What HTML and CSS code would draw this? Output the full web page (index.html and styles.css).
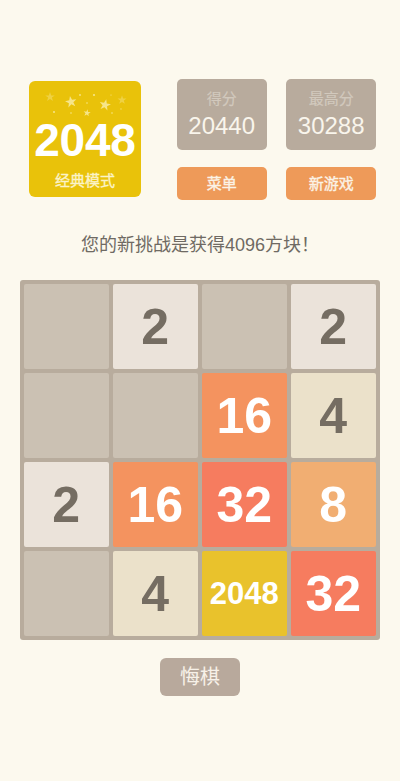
FILE: index.html
```html
<!DOCTYPE html>
<html lang="zh">
<head>
<meta charset="utf-8">
<title>2048</title>
<link rel="stylesheet" href="styles.css">
</head>
<body>
<main class="page">
  <header class="top">
    <div class="logo">
      <svg class="stars" viewBox="0 0 112 36" aria-hidden="true">
        <defs>
          <path id="star" d="M0-5 1.180-1.620 4.760-1.550 1.900.62 2.940 4.050 0 2-2.940 4.050-1.900.62-4.760-1.550-1.180-1.620z"/>
        </defs>
        <g class="star-group">
          <use class="faint" href="#star" transform="translate(21 14) scale(1)"/>
          <use class="faint" href="#star" transform="translate(93 17) scale(.95)"/>
          <use href="#star" transform="translate(42 19) rotate(-10) scale(1.200)"/>
          <use href="#star" transform="translate(76 22) rotate(12) scale(1.200)"/>
          <use href="#star" transform="translate(58 30) rotate(8) scale(.75)"/>
          <circle cx="51" cy="12" r=".9"/><circle cx="65" cy="12" r="1.100"/><circle cx="58" cy="20" r=".8"/>
          <circle cx="25" cy="29" r="1"/><circle cx="42" cy="30" r=".8"/><circle cx="83" cy="30" r=".8"/>
          <circle cx="82" cy="12" r=".6"/>
          <circle class="faint" cx="92" cy="26" r=".9"/>
        </g>
      </svg>
      <div class="logo-num">2048</div>
      <div class="logo-mode">经典模式</div>
    </div>
    <div class="side">
      <div class="side-row">
        <div class="score"><div class="score-label">得分</div><div class="score-num">20440</div></div>
        <div class="score"><div class="score-label">最高分</div><div class="score-num">30288</div></div>
      </div>
      <div class="side-row">
        <div class="btn">菜单</div>
        <div class="btn">新游戏</div>
      </div>
    </div>
  </header>
  <p class="msg">您的新挑战是获得4096方块！</p>
  <section class="board">
    <div class="cell"></div><div class="cell t2">2</div><div class="cell"></div><div class="cell t2">2</div>
    <div class="cell"></div><div class="cell"></div><div class="cell t16">16</div><div class="cell t4">4</div>
    <div class="cell t2">2</div><div class="cell t16">16</div><div class="cell t32">32</div><div class="cell t8">8</div>
    <div class="cell"></div><div class="cell t4">4</div><div class="cell t2048">2048</div><div class="cell t32">32</div>
  </section>
  <div class="undo-row"><div class="undo">悔棋</div></div>
</main>
</body>
</html>
```
FILE: styles.css
```css
* { box-sizing: border-box; }
html, body { margin: 0; height: 100%; }
body {
  background: #fcf9ee;
  font-family: "Liberation Sans", "Noto Sans CJK SC", sans-serif;
  overflow: hidden;
}
.page { width: 400px; height: 781px; padding-top: 79px; }
.top { display: flex; padding-left: 29px; }
.logo {
  position: relative;
  width: 112px;
  height: 116px;
  margin-top: 2px;
  background: #e9c20a;
  border-radius: 6px;
  color: #fff;
  text-align: center;
  padding-top: 34px;
}
.stars { position: absolute; left: 0; top: 2px; width: 112px; height: 36px; }
.star-group { fill: #f6e58a; }
.faint { opacity: .45; }
.logo-num { font-size: 46px; font-weight: 700; line-height: 50px; letter-spacing: -.2px; }
.logo-mode { font-size: 15px; line-height: 20px; margin-top: 6px; color: #fbf3c8; -webkit-text-stroke: .35px #fbf3c8; }
.side { display: flex; flex-direction: column; gap: 17.500px; margin-left: 35.700px; }
.side-row { display: flex; gap: 19.500px; }
.score {
  width: 90px;
  height: 70.500px;
  background: #b8ab9d;
  border-radius: 5px;
  text-align: center;
  padding-top: 9px;
}
.score-label { font-size: 15px; line-height: 22px; color: #d2c9bd; -webkit-text-stroke: .2px #d2c9bd; }
.score-num { font-size: 24px; line-height: 30px; margin-top: 1px; color: #f9f5ec; }
.btn {
  width: 90px;
  height: 33px;
  background: #ee9a59;
  border-radius: 5px;
  color: #fbf3e6;
  font-size: 15px;
  line-height: 33px;
  text-align: center;
  -webkit-text-stroke: .35px #fbf3e6;
}
.msg {
  margin: 33px 0 0;
  height: 24px;
  font-size: 18px;
  line-height: 24px;
  text-align: center;
  color: #6f6a63;
}
.board {
  display: grid;
  grid-template-columns: repeat(4, 84.500px);
  grid-auto-rows: 84.500px;
  gap: 4.500px;
  width: 359.500px;
  height: 359.500px;
  margin: 23px 0 0 20px;
  padding: 4px;
  background: #b8ac9d;
  border-radius: 3px;
}
.cell {
  background: #cbc1b3;
  border-radius: 2px;
  display: flex;
  align-items: center;
  justify-content: center;
  padding-top: 2px;
  font-size: 50px;
  font-weight: 700;
  color: #fff;
}
.t2 { background: #ebe3da; color: #756d62; }
.t4 { background: #ebe1ca; color: #756d62; }
.t8 { background: #f1ae72; }
.t16 { background: #f4935f; }
.t32 { background: #f67c5f; }
.t2048 { background: #e9c22c; font-size: 31px; }
.undo-row { display: flex; justify-content: center; margin-top: 18.500px; }
.undo {
  width: 80px;
  height: 38px;
  background: #b8a99c;
  border-radius: 6px;
  color: #f7f1e8;
  font-size: 20px;
  line-height: 38px;
  text-align: center;
}
```
